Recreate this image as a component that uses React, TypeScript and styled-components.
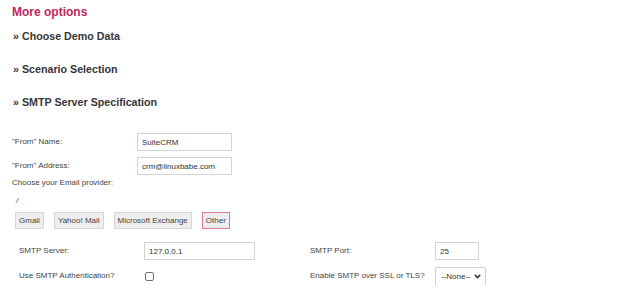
import React from "react";
import styled, { createGlobalStyle } from "styled-components";

const Global = createGlobalStyle`
  html, body { margin: 0; padding: 0; background: #ffffff; }
  body { font-family: "Liberation Sans", Arial, sans-serif; color: #444; }
`;

const Page = styled.div`
  padding: 5px 12px 0 12px;
  width: 640px;
  box-sizing: border-box;
`;

const Title = styled.h2`
  margin: 0;
  font-size: 12px;
  line-height: 14px;
  font-weight: bold;
  color: #c0255c;
`;

const SectionHeading = styled.h3<{ $first?: boolean }>`
  margin: ${(p) => (p.$first ? "10px" : "19px")} 0 0 1px;
  font-size: 10.7px;
  line-height: 14px;
  font-weight: bold;
  color: #363636;
`;

const FormRows = styled.div`
  margin-top: 24px;
  display: flex;
  flex-direction: column;
  gap: 6px;
`;

const FormRow = styled.div`
  display: grid;
  grid-template-columns: 125px 95px;
  align-items: center;
`;

const Label = styled.label`
  font-size: 8px;
  line-height: 10px;
  color: #444;
`;

const TextInput = styled.input<{ $w?: number }>`
  box-sizing: border-box;
  width: ${(p) => p.$w ?? 95}px;
  height: 18px;
  border: 1px solid #d4d4d4;
  border-radius: 0;
  padding: 0 4px;
  font-family: "Liberation Sans", Arial, sans-serif;
  font-size: 8px;
  color: #333;
  background: #fff;
  outline: none;
`;

const Prompt = styled.div`
  margin-top: 3px;
  font-size: 8px;
  line-height: 10px;
  color: #444;
`;

const Slash = styled.div`
  margin: 8px 0 0 4px;
  font-size: 8px;
  line-height: 10px;
  font-style: italic;
  color: #444;
`;

const ProviderBar = styled.div`
  margin: 6px 0 0 3px;
  display: flex;
  gap: 10px;
`;

const ProviderButton = styled.button<{ $active?: boolean }>`
  box-sizing: border-box;
  height: 17px;
  padding: 0 3px;
  font-family: "Liberation Sans", Arial, sans-serif;
  font-size: 8px;
  color: #444;
  background: #eeeeee;
  border: 1px solid ${(p) => (p.$active ? "#d97a9b" : "#d6d6d6")};
  border-radius: 0;
  cursor: pointer;
`;

const SmtpGrid = styled.div`
  margin: 13px 0 0 7px;
  display: grid;
  grid-template-columns: 125px 166px 125px 1fr;
  grid-auto-rows: 18px;
  row-gap: 7px;
  align-items: center;
`;

const Checkbox = styled.input`
  appearance: none;
  margin: 0 0 0 1px;
  width: 9px;
  height: 9px;
  border: 1px solid #6f6f6f;
  border-radius: 2px;
  background: #fff;
  box-sizing: border-box;
  display: block;
`;

const SelectBox = styled.div`
  box-sizing: border-box;
  width: 51px;
  height: 19px;
  border: 1px solid #cfcfcf;
  border-radius: 2px;
  display: flex;
  align-items: center;
  justify-content: space-between;
  padding: 0 4px 0 5px;
  font-size: 8px;
  color: #333;
  background: #fff;
`;

const Chevron = () => (
  <svg width="7" height="5" viewBox="0 0 7 5">
    <path d="M0.8 0.9 L3.5 3.6 L6.2 0.9" fill="none" stroke="#333" strokeWidth="1.5" />
  </svg>
);

export default function App() {
  return (
    <>
      <Global />
      <Page>
        <Title>More options</Title>
        <SectionHeading $first>» Choose Demo Data</SectionHeading>
        <SectionHeading>» Scenario Selection</SectionHeading>
        <SectionHeading>» SMTP Server Specification</SectionHeading>

        <FormRows>
          <FormRow>
            <Label>"From" Name:</Label>
            <TextInput defaultValue="SuiteCRM" />
          </FormRow>
          <FormRow>
            <Label>"From" Address:</Label>
            <TextInput defaultValue="crm@linuxbabe.com" />
          </FormRow>
        </FormRows>
        <Prompt>Choose your Email provider:</Prompt>
        <Slash>/</Slash>
        <ProviderBar>
          <ProviderButton>Gmail</ProviderButton>
          <ProviderButton>Yahoo! Mail</ProviderButton>
          <ProviderButton>Microsoft Exchange</ProviderButton>
          <ProviderButton $active>Other</ProviderButton>
        </ProviderBar>

        <SmtpGrid>
          <Label>SMTP Server:</Label>
          <TextInput $w={111} defaultValue="127.0.0.1" />
          <Label>SMTP Port:</Label>
          <TextInput $w={44} defaultValue="25" />
          <Label>Use SMTP Authentication?</Label>
          <div>
            <Checkbox type="checkbox" />
          </div>
          <Label>Enable SMTP over SSL or TLS?</Label>
          <SelectBox>
            <span>--None--</span>
            <Chevron />
          </SelectBox>
        </SmtpGrid>
      </Page>
    </>
  );
}
